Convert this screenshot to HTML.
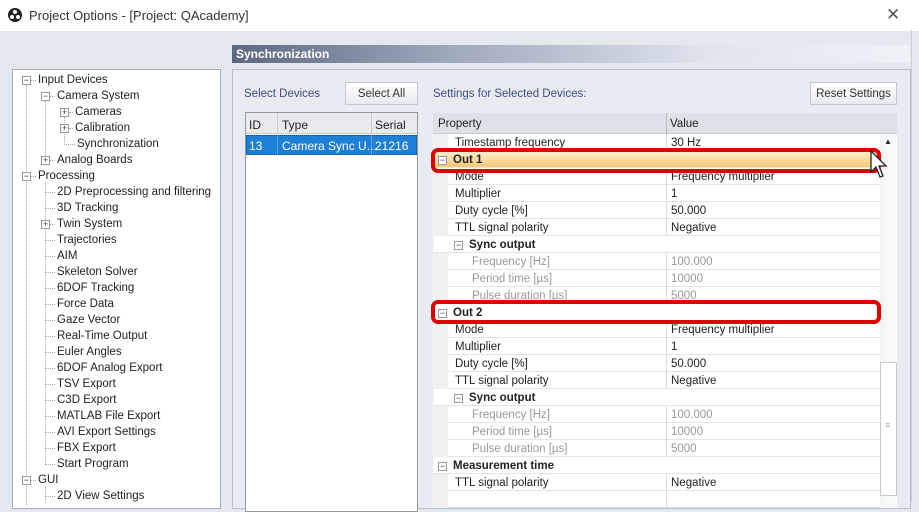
<!DOCTYPE html>
<html><head><meta charset="utf-8"><style>
*{margin:0;padding:0;box-sizing:border-box}
body{width:919px;height:502px;overflow:hidden;background:#e4e8ef;font-family:"Liberation Sans",sans-serif;font-size:11.5px;color:#222;position:relative}
.a{position:absolute;white-space:nowrap}
.t{position:absolute;white-space:nowrap;line-height:16px}
.pb{position:absolute;width:9px;height:9px;border:1px solid #999;background:#fff;font-size:9px;line-height:7px;text-align:center;color:#444}
.row{position:absolute;left:434px;width:446px;height:17px;border-bottom:1px solid #e4e4e4;background:#fff}
.row .s{position:absolute;left:0;top:0;width:14px;height:17px;background:#f0f0f0}
.row .k{position:absolute;top:1px;line-height:15px}
.row .v{position:absolute;left:232px;top:0;height:17px;border-left:1px solid #ddd;padding-left:4px;line-height:16px}
.g{color:#999}
.b{font-weight:bold}
.red{position:absolute;left:431px;width:450px;border:4px solid #e10000;border-radius:7px}
</style></head><body>
<div class="a" style="left:0;top:0;width:919px;height:31px;background:#fff"></div>
<svg class="a" style="left:8px;top:8px" width="14" height="14" viewBox="0 0 14 14"><circle cx="7" cy="7" r="7" fill="#222"/><circle cx="7" cy="4" r="2" fill="#fff"/><circle cx="4" cy="9" r="2" fill="#fff"/><circle cx="10" cy="9" r="2" fill="#fff"/></svg>
<div class="a" style="left:29px;top:8px;font-size:13px;color:#333">Project Options - [Project: QAcademy]</div>
<div class="a" style="left:886px;top:5px;font-size:17px;color:#555">✕</div>

<div class="a" style="left:232px;top:45px;width:678px;height:18px;background:linear-gradient(90deg,#5c6880,#9aa5b8 30%,#dfe4ee 70%,#eef1f6)"></div>
<div class="a" style="left:236px;top:47px;font-weight:bold;color:#fff;font-size:12px">Synchronization</div>
<div class="a" style="left:232px;top:69px;width:679px;height:440px;border:1px solid #b9c0cc;background:#e8ebf1"></div>
<div class="a" style="left:911px;top:30px;width:1px;height:472px;background:#c8cdd6"></div>

<div class="a" style="left:12px;top:69px;width:209px;height:440px;background:#fff;border:1px solid #aab"></div>
<div class="a" style="left:26px;top:85px;height:420px;border-left:1px dotted #aaa"></div>
<div class="a" style="left:45px;top:101px;height:60px;border-left:1px dotted #aaa"></div>
<div class="a" style="left:64px;top:117px;height:28px;border-left:1px dotted #aaa"></div>
<div class="a" style="left:45px;top:183px;height:282px;border-left:1px dotted #aaa"></div>
<div class="a" style="left:45px;top:487px;height:16px;border-left:1px dotted #aaa"></div>
<div id="tree"></div>

<div class="a" style="left:244px;top:88px;color:#3b4f82">Select Devices</div>
<div class="a" style="left:345px;top:82px;width:73px;height:23px;border:1px solid #c4c8d0;background:linear-gradient(#fff,#e8eaee);text-align:center;line-height:22px;color:#333">Select All</div>
<div class="a" style="left:245px;top:112px;width:173px;height:400px;background:#fff;border:1px solid #999"></div>
<div class="a" style="left:246px;top:113px;width:171px;height:21px;background:#e8eaef;border-bottom:1px solid #ccc"></div>
<div class="a" style="left:277px;top:113px;width:1px;height:21px;background:#ccc"></div>
<div class="a" style="left:371px;top:113px;width:1px;height:21px;background:#ccc"></div>
<div class="a" style="left:249px;top:118px;font-size:12px">ID</div>
<div class="a" style="left:282px;top:118px;font-size:12px">Type</div>
<div class="a" style="left:375px;top:118px;font-size:12px">Serial</div>
<div class="a" style="left:246px;top:135px;width:171px;height:20px;background:#1e7fd6;border:1px dotted #0b4a8a"></div>
<div class="a" style="left:277px;top:135px;width:1px;height:20px;background:#5a9de0"></div>
<div class="a" style="left:371px;top:135px;width:1px;height:20px;background:#5a9de0"></div>
<div class="a" style="left:249px;top:139px;color:#fff;font-size:12px">13</div>
<div class="a" style="left:282px;top:139px;color:#fff;font-size:12px">Camera Sync U...</div>
<div class="a" style="left:375px;top:139px;color:#fff;font-size:12px">21216</div>

<div class="a" style="left:433px;top:88px;color:#3b4f82">Settings for Selected Devices:</div>
<div class="a" style="left:810px;top:82px;width:87px;height:23px;border:1px solid #c4c8d0;background:linear-gradient(#fff,#e8eaee);text-align:center;line-height:22px;color:#333">Reset Settings</div>
<div class="a" style="left:433px;top:113px;width:464px;height:395px;background:#f6f7f9"></div>
<div class="a" style="left:433px;top:113px;width:464px;height:21px;background:#dde1e8;border-bottom:1px solid #c8ccd4"></div>
<div class="a" style="left:666px;top:113px;width:1px;height:21px;background:#bbb"></div>
<div class="a" style="left:438px;top:118px">Property</div>
<div class="a" style="left:670px;top:118px">Value</div>
<div id="grid"></div>
<div class="a" style="left:880px;top:134px;width:17px;height:370px;background:linear-gradient(90deg,#f4f4f4,#fafafa)"></div>
<div class="a" style="left:884px;top:137px;font-size:8px;color:#223">▲</div>
<div class="a" style="left:880px;top:362px;width:17px;height:134px;background:#fff;border:1px solid #c8c8c8"></div>
<div class="a" style="left:885px;top:420px;font-size:9px;color:#aaa">≡</div>

<div class="red" style="top:148px;height:25px"></div>
<div class="red" style="top:300px;height:24px"></div>
<svg class="a" style="left:869px;top:150px" width="22" height="30" viewBox="0 0 22 30"><path d="M2 1 L2 22 L7 17 L11 27 L14 26 L10 16 L17 16 Z" fill="#fff" stroke="#222" stroke-width="1.3"/></svg>

<script>
var tree=[[0,'Input Devices','-'],[1,'Camera System','-'],[2,'Cameras','+'],[2,'Calibration','+'],[2,'Synchronization',''],[1,'Analog Boards','+'],[0,'Processing','-'],[1,'2D Preprocessing and filtering',''],[1,'3D Tracking',''],[1,'Twin System','+'],[1,'Trajectories',''],[1,'AIM',''],[1,'Skeleton Solver',''],[1,'6DOF Tracking',''],[1,'Force Data',''],[1,'Gaze Vector',''],[1,'Real-Time Output',''],[1,'Euler Angles',''],[1,'6DOF Analog Export',''],[1,'TSV Export',''],[1,'C3D Export',''],[1,'MATLAB File Export',''],[1,'AVI Export Settings',''],[1,'FBX Export',''],[1,'Start Program',''],[0,'GUI','-'],[1,'2D View Settings','']];
var h='';
tree.forEach(function(r,i){var y=72+i*16;var lv=r[0];var bx=[22,41,60][lv];var tx=[38,57,75][lv];
var adj=(r[1]=='Synchronization')?2:0;
if(r[2])h+='<div class="pb" style="left:'+bx+'px;top:'+(y+4)+'px">'+(r[2]=='-'?'−':'+')+'</div>';
h+='<div class="a" style="left:'+(r[2]?bx+9:bx+4)+'px;top:'+(y+8)+'px;width:'+(tx-(r[2]?bx+9:bx+4)-2+adj)+'px;border-top:1px dotted #aaa"></div>';
h+='<div class="t" style="left:'+(tx+adj)+'px;top:'+y+'px">'+r[1]+'</div>';});
document.getElementById('tree').innerHTML=h;
var rows=[['Timestamp frequency','30 Hz',1],['Out 1','',0,'c1'],['Mode','Frequency multiplier',1],['Multiplier','1',1],['Duty cycle [%]','50.000',1],['TTL signal polarity','Negative',1],['Sync output','',1,'c'],['Frequency [Hz]','100.000',2],['Period time [µs]','10000',2],['Pulse duration [µs]','5000',2],['Out 2','',0,'c'],['Mode','Frequency multiplier',1],['Multiplier','1',1],['Duty cycle [%]','50.000',1],['TTL signal polarity','Negative',1],['Sync output','',1,'c'],['Frequency [Hz]','100.000',2],['Period time [µs]','10000',2],['Pulse duration [µs]','5000',2],['Measurement time','',0,'c'],['TTL signal polarity','Negative',1],['','',1]];
h='';
rows.forEach(function(r,i){var y=134+i*17;var cat=r[3];
var bg=cat=='c1'?'background:linear-gradient(#fdf0d4,#f6c874)':'';
h+='<div class="row" style="top:'+y+'px;'+bg+'">';
if(!cat)h+='<div class="s"></div>';
if(cat){var px=r[2]==0?4:20;h+='<div class="pb" style="left:'+px+'px;top:5px">−</div><div class="k b" style="left:'+(px+15)+'px;top:2px">'+r[0]+'</div>';}
else{var kx=r[2]==2?38:21;h+='<div class="k'+(r[2]==2?' g':'')+'" style="left:'+kx+'px;top:2px">'+r[0]+'</div><div class="v'+(r[2]==2?' g':'')+'" style="line-height:18px">'+r[1]+'</div>';}
h+='</div>';});
document.getElementById('grid').innerHTML=h;
</script>
</body></html>
